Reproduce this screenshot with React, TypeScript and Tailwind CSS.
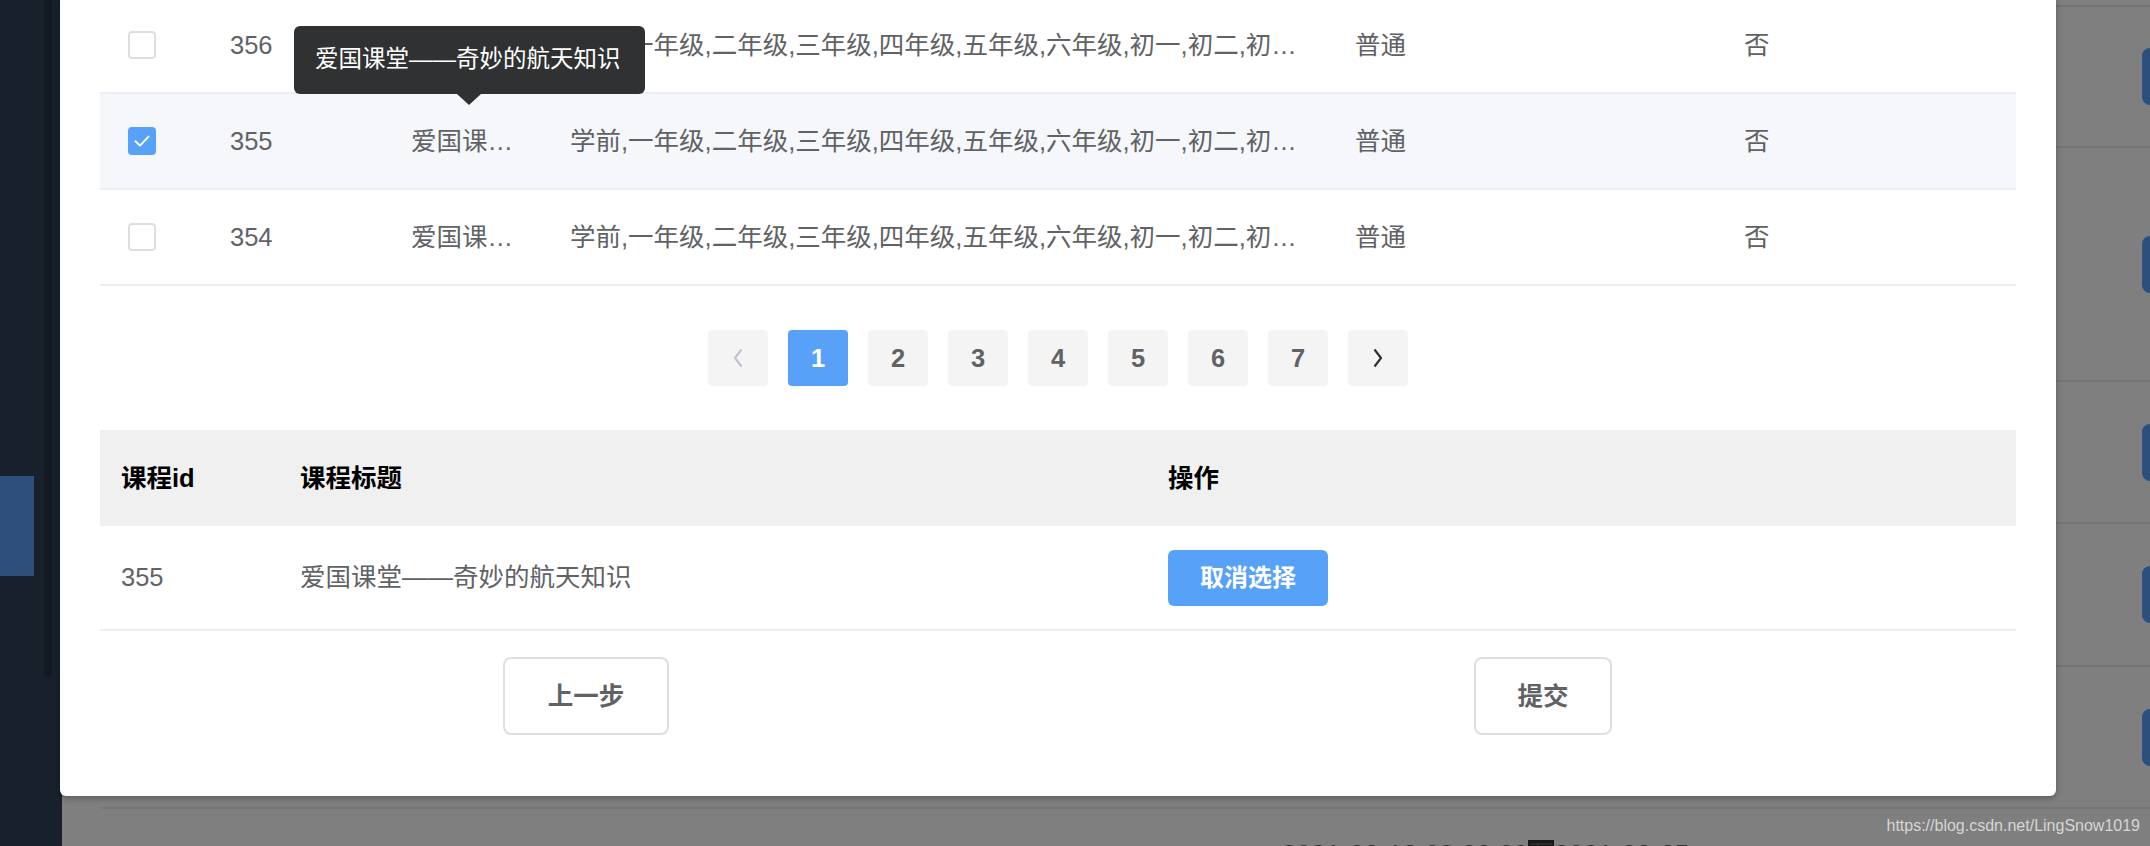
import React from "react";

const grades =
  "学前,一年级,二年级,三年级,四年级,五年级,六年级,初一,初二,初三,高一,高二,高三";
const title = "爱国课堂——奇妙的航天知识";

const courses = [
  { id: 356, checked: false },
  { id: 355, checked: true },
  { id: 354, checked: false },
];

function Checkbox({ checked }: { checked: boolean }) {
  if (checked) {
    return (
      <span className="flex h-[28px] w-[28px] items-center justify-center rounded-[4px] bg-[#57a1f9]">
        <svg width="20" height="20" viewBox="0 0 20 20" fill="none">
          <path d="M3.5 10.2 8 14.6 16.5 5.6" stroke="#fff" strokeWidth="2" strokeLinecap="round" strokeLinejoin="round" />
        </svg>
      </span>
    );
  }
  return <span className="block h-[28px] w-[28px] rounded-[4px] border-2 border-[#dcdfe6] bg-white" />;
}

function PagerArrow({ dir, disabled }: { dir: "left" | "right"; disabled?: boolean }) {
  return (
    <svg width="12" height="22" viewBox="0 0 12 22" fill="none">
      <path
        d={dir === "left" ? "M9.5 2.5 3 11 9.5 19.5" : "M2.5 2.5 9 11 2.5 19.5"}
        stroke={disabled ? "#c0c4cc" : "#303133"}
        strokeWidth="2.2"
        strokeLinejoin="round"
      />
    </svg>
  );
}

// background page rows (under the overlay)
const bgRows = [7, 141, 234, 142, 143, 142];

export default function App() {
  return (
    <div className="relative h-[846px] w-[2150px] overflow-hidden font-[family-name:Liberation_Sans,Noto_Sans_CJK_SC,sans-serif] text-[25.5px] text-[#606266]">
      {/* page under the dialog */}
      <div className="flex h-full">
        <div className="flex h-full w-[62px] shrink-0 bg-[#304156]">
          <div className="w-[44px] pt-[476px]">
            <div className="h-[100px] w-[34px] bg-[#5a9ef2]" />
          </div>
          <div className="w-[8px]">
            <div className="h-[677px] rounded-b-[4px] bg-[#243244]" />
          </div>
        </div>
        <div className="flex-1 bg-white pl-[40px]">
          {bgRows.map((h, i) => (
            <div
              key={i}
              style={{ height: h }}
              className="flex w-[2100px] items-center justify-end border-b-2 border-[#ebebeb]"
            >
              {i > 0 && <div className="h-[57px] w-[60px] rounded-[8px] bg-[#5a9ef8]" />}
            </div>
          ))}
          <div className="pl-[1180px] pt-[26px] whitespace-nowrap tracking-[0.5px] text-[#5c5c5c]">
            2021-03-18 00:00:00<span className="bg-[#333]">至</span>2021-03-25
          </div>
        </div>
      </div>

      {/* modal overlay */}
      <div className="absolute inset-0 bg-black/50" />

      {/* dialog */}
      <div className="absolute left-[60px] top-[-2px] w-[1996px] rounded-b-[6px] bg-white px-[40px] pb-[61px] shadow-[0_2px_6px_rgba(0,0,0,0.3)]">
        {/* course table */}
        <div>
          {courses.map((c) => (
            <div
              key={c.id}
              className={`flex h-[96px] items-center border-b-2 border-[#ebeef5] ${c.checked ? "bg-[#f5f7fa]" : "bg-white"}`}
            >
              <div className="w-[112px] shrink-0 pl-[28px]">
                <Checkbox checked={c.checked} />
              </div>
              <div className="w-[181px] shrink-0 pl-[18px]">{c.id}</div>
              <div className="w-[159px] shrink-0 truncate px-[18px]">{title}</div>
              <div className="w-[785px] shrink-0 truncate px-[18px]">{grades}</div>
              <div className="w-[389px] shrink-0 pl-[18px]">普通</div>
              <div className="flex-1 pl-[18px]">否</div>
            </div>
          ))}
        </div>

        {/* pagination */}
        <div className="mt-[44px] flex justify-center gap-[20px] font-bold">
          <div className="flex h-[56px] w-[60px] items-center justify-center rounded-[4px] bg-[#f4f4f5]">
            <PagerArrow dir="left" disabled />
          </div>
          {[1, 2, 3, 4, 5, 6, 7].map((n) => (
            <div
              key={n}
              className={`flex h-[56px] w-[60px] items-center justify-center rounded-[4px] ${n === 1 ? "bg-[#57a1f9] text-white" : "bg-[#f4f4f5] text-[#606266]"}`}
            >
              {n}
            </div>
          ))}
          <div className="flex h-[56px] w-[60px] items-center justify-center rounded-[4px] bg-[#f4f4f5]">
            <PagerArrow dir="right" />
          </div>
        </div>

        {/* selected courses */}
        <div className="mt-[44px]">
          <div className="flex h-[96px] items-center bg-[#f0f0f0] font-bold text-black">
            <div className="w-[182px] shrink-0 pl-[21px]">课程id</div>
            <div className="w-[868px] shrink-0 pl-[18px]">课程标题</div>
            <div className="flex-1 pl-[18px]">操作</div>
          </div>
          <div className="flex h-[105px] items-center border-b-2 border-[#ebeef5]">
            <div className="w-[182px] shrink-0 pl-[21px]">355</div>
            <div className="w-[868px] shrink-0 pl-[18px]">{title}</div>
            <div className="flex-1 pl-[18px]">
              <button className="h-[56px] w-[160px] rounded-[6px] bg-[#57a1f9] text-[24px] font-bold text-white">
                取消选择
              </button>
            </div>
          </div>
        </div>

        {/* footer buttons */}
        <div className="mt-[26px] flex">
          <button className="ml-[403px] h-[78px] w-[166px] rounded-[8px] border-2 border-[#dcdfe6] bg-white font-bold text-[#606266]">
            上一步
          </button>
          <button className="ml-[805px] h-[78px] w-[138px] rounded-[8px] border-2 border-[#dcdfe6] bg-white font-bold text-[#606266]">
            提交
          </button>
        </div>

        {/* tooltip over the hovered title */}
        <div className="absolute left-[234px] top-[28px]">
          <div className="flex h-[68px] items-center whitespace-nowrap rounded-[6px] bg-[#303133] pl-[21px] pr-[24px] text-[23.5px] text-white">
            {title}
          </div>
          <div className="mx-auto h-0 w-0 border-x-[12px] border-t-[11px] border-x-transparent border-t-[#303133]" />
        </div>
      </div>

      {/* watermark */}
      <div className="absolute bottom-[8px] right-[10px] text-[16px] text-[#d6d6d6]">
        https://blog.csdn.net/LingSnow1019
      </div>
    </div>
  );
}
